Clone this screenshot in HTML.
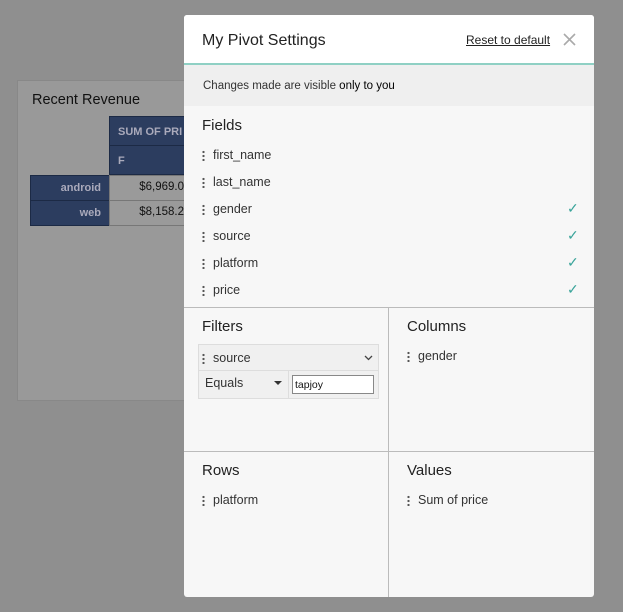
<!DOCTYPE html>
<html><head><style>
*{box-sizing:border-box;margin:0;padding:0}
body{width:623px;height:612px;background:#8f8f8f;font-family:"Liberation Sans",sans-serif;position:relative;overflow:hidden;color:#333}
.card{position:absolute;left:17px;top:80px;width:180px;height:321px;background:#999;border:1px solid #888}
.card h3{position:absolute;left:14px;top:11px;font-weight:normal;font-size:14.5px;color:#111}
.nv{position:absolute;background:#2c3d5f;color:#aab;font-size:11px;font-weight:bold;border:1px solid #1c2a45;white-space:nowrap;overflow:hidden}
.cell{position:absolute;background:#9a9a9a;border:1px solid #777;font-size:11.5px;color:#111;text-align:right;padding-right:4px;line-height:23px}
.modal{position:absolute;left:184px;top:15px;width:410px;height:582px;background:#f7f7f7;border-radius:3px;overflow:hidden}
.hd{height:50px;background:#fff;border-bottom:2px solid #8fd0c4;position:relative}
.hd .t{position:absolute;left:18px;top:17px;font-size:16px;color:#222}
.hd .r{position:absolute;left:282px;top:18px;font-size:12px;text-decoration:underline;color:#222}
.nt{height:41px;background:#efefef;font-size:11.5px;padding:15px 0 0 19px;color:#333}
.nt b{font-weight:normal;color:#000}
.sec{font-size:15px;color:#222;position:absolute}
.it{position:absolute;font-size:12.5px;color:#333}
.it:before{content:"";position:absolute;left:-11px;top:2px;width:3px;height:11px;background:radial-gradient(circle,#555 1px,transparent 1.3px) 0 0/3px 4px}
.ck{position:absolute;left:383px;font-size:14px;color:#3aa49a}
.hl{position:absolute;left:0;width:410px;height:1px;background:#bbb}
</style></head><body>
<div class="card"><h3>Recent Revenue</h3></div>
<div class="nv" style="left:109px;top:116px;width:80px;height:30px;padding:9px 0 0 8px">SUM OF PRI</div>
<div class="nv" style="left:109px;top:145px;width:80px;height:30px;padding:9px 0 0 8px">F</div>
<div class="nv" style="left:30px;top:175px;width:80px;height:26px;text-align:right;padding:6px 8px 0 0">android</div>
<div class="nv" style="left:30px;top:200px;width:80px;height:26px;text-align:right;padding:6px 8px 0 0">web</div>
<div class="cell" style="left:109px;top:175px;width:80px;height:26px">$6,969.0</div>
<div class="cell" style="left:109px;top:200px;width:80px;height:26px">$8,158.2</div>
<div class="modal">
<div class="hd"><span class="t">My Pivot Settings</span><span class="r">Reset to default</span>
<svg style="position:absolute;left:379px;top:18px" width="13" height="13"><path d="M1 1L12 12M12 1L1 12" stroke="#aaa" stroke-width="1.6"/></svg></div>
<div class="nt">Changes made are visible <b>only to you</b></div>
<div class="sec" style="left:18px;top:102px">Fields</div>
<div class="it" style="left:29px;top:133px">first_name</div>
<div class="it" style="left:29px;top:160px">last_name</div>
<div class="it" style="left:29px;top:187px">gender</div><div class="ck" style="top:185px">✓</div>
<div class="it" style="left:29px;top:214px">source</div><div class="ck" style="top:212px">✓</div>
<div class="it" style="left:29px;top:241px">platform</div><div class="ck" style="top:239px">✓</div>
<div class="it" style="left:29px;top:268px">price</div><div class="ck" style="top:266px">✓</div>
<div class="hl" style="top:292px"></div>
<div class="hl" style="top:436px"></div>
<div style="position:absolute;left:204px;top:292px;width:1px;height:290px;background:#bbb"></div>
<div class="sec" style="left:18px;top:303px">Filters</div>
<div class="sec" style="left:223px;top:303px">Columns</div>
<div class="sec" style="left:18px;top:447px">Rows</div>
<div class="sec" style="left:223px;top:447px">Values</div>
<div style="position:absolute;left:14px;top:329px;width:181px;height:55px;border:1px solid #ddd;background:#f0f0f0"></div>
<div style="position:absolute;left:14px;top:355px;width:181px;height:1px;background:#ddd"></div>
<div style="position:absolute;left:104px;top:355px;width:1px;height:29px;background:#ddd"></div>
<div class="it" style="left:29px;top:336px">source</div>
<svg style="position:absolute;left:180px;top:340px" width="9" height="6"><path d="M1 1L4.5 4.5L8 1" stroke="#444" stroke-width="1.3" fill="none"/></svg>
<div style="position:absolute;left:21px;top:361px;font-size:12.5px">Equals</div>
<div style="position:absolute;left:90px;top:366px;width:0;height:0;border:4px solid transparent;border-top-color:#333"></div>
<div style="position:absolute;left:108px;top:360px;width:82px;height:19px;background:#fff;border:1px solid #888;font-size:10.5px;padding:3px 2px;color:#111">tapjoy</div>
<div class="it" style="left:234px;top:334px">gender</div>
<div class="it" style="left:29px;top:478px">platform</div>
<div class="it" style="left:234px;top:478px">Sum of price</div>
</div>
</body></html>
